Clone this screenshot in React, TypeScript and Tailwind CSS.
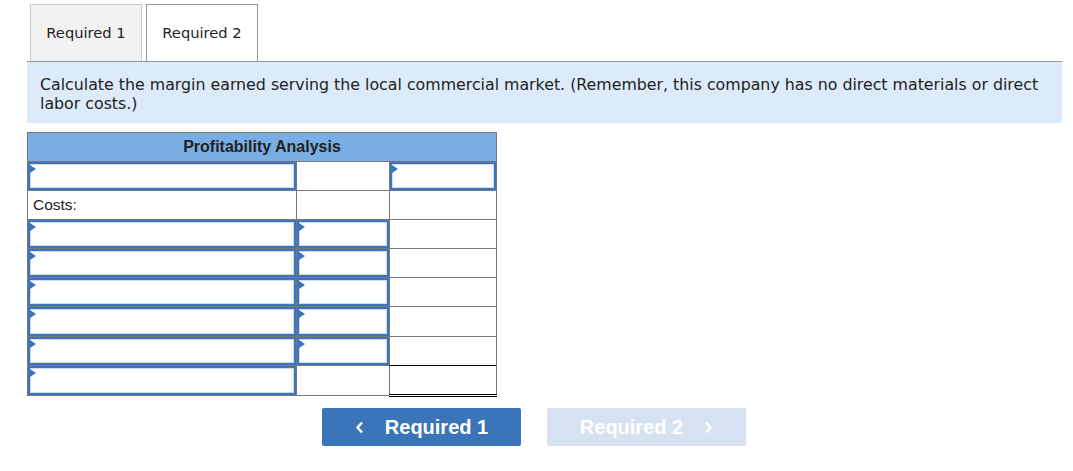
import React from "react";

type CellKind = "inputMark" | "plain" | "label";

function Marker() {
  return (
    <span className="pointer-events-none absolute left-0 top-[1px] h-0 w-0 border-y-[4px] border-l-[6px] border-y-transparent border-l-[#3b73b9]" />
  );
}

function InputBox({ mark }: { mark: boolean }) {
  return (
    <div className="relative h-full w-full border-2 border-[#3d74bb] bg-white shadow-[inset_0_0_0_1px_#c8dcf3]">
      {mark && <Marker />}
    </div>
  );
}

const rows: { cells: CellKind[]; h: string; last?: boolean }[] = [
  { cells: ["inputMark", "plain", "inputMark"], h: "h-[29px]" },
  { cells: ["label", "plain", "plain"], h: "h-[29px]" },
  { cells: ["inputMark", "inputMark", "plain"], h: "h-[29px]" },
  { cells: ["inputMark", "inputMark", "plain"], h: "h-[29px]" },
  { cells: ["inputMark", "inputMark", "plain"], h: "h-[29px]" },
  { cells: ["inputMark", "inputMark", "plain"], h: "h-[30px]" },
  { cells: ["inputMark", "inputMark", "plain"], h: "h-[29px]" },
  { cells: ["inputMark", "plain", "plain"], h: "h-[30px]", last: true },
];

export default function App() {
  return (
    <div className="min-h-[471px] bg-white pt-[4px] font-['DejaVu_Sans',Verdana,sans-serif] text-[#222]">
      <div className="ml-[27px] w-[1035px]">
        {/* Tabs */}
        <div className="flex gap-[4px] pl-[3px]">
          <div className="flex h-[57px] w-[112px] items-center justify-center border border-b-0 border-[#c8c8c8] bg-[#f2f2f2] text-[14.7px]">
            Required 1
          </div>
          <div className="flex h-[57px] w-[112px] items-center justify-center border border-b-0 border-[#999] bg-white text-[14.7px]">
            Required 2
          </div>
        </div>

        {/* Instructions */}
        <div className="border-t border-[#999] bg-[#dcebf9] px-[13px] pb-[10px] pt-[13px] text-[15.8px] leading-[19px]">
          Calculate the margin earned serving the local commercial market. (Remember, this company has no direct materials or direct labor costs.)
        </div>

        {/* Table */}
        <table className="mt-[9px] w-[469px] table-fixed border-collapse border border-[#777] font-['Liberation_Sans',Arial,sans-serif] text-[15.5px]">
          <colgroup>
            <col className="w-[269px]" />
            <col className="w-[93px]" />
            <col className="w-[107px]" />
          </colgroup>
          <thead>
            <tr>
              <th colSpan={3} className="h-[29px] border border-[#777] bg-[#79ade4] text-center text-[16px] font-bold text-[#222]">
                Profitability Analysis
              </th>
            </tr>
          </thead>
          <tbody>
            {rows.map((r, i) => (
              <tr key={i} className={r.h}>
                {r.cells.map((c, j) => {
                  let cls = `${r.h} border border-[#777] p-0 align-middle`;
                  if (r.last && j > 0) cls += " border-t-black";
                  if (r.last && j === 2) cls += " border-b-[3px] border-b-black border-double";
                  return (
                    <td key={j} className={cls}>
                      {c === "label" && <span className="pl-[5px]">Costs:</span>}
                      {c === "inputMark" && <InputBox mark />}
                    </td>
                  );
                })}
              </tr>
            ))}
          </tbody>
        </table>

        {/* Nav buttons */}
        <div className="mt-[11px] flex gap-[26px] pl-[295px] font-['Liberation_Sans',Arial,sans-serif]">
          <button className="flex h-[38px] w-[199px] items-center justify-center gap-[21px] rounded-[2px] bg-[#3a75ba] text-[20px] font-bold text-white">
            <svg width="9" height="13" viewBox="0 0 9 13">
              <polyline points="7,1.5 2.5,6.5 7,11.5" fill="none" stroke="white" strokeWidth="2.4" />
            </svg>
            <span>Required 1</span>
          </button>
          <button className="flex h-[38px] w-[199px] items-center justify-center gap-[21px] rounded-[2px] bg-[#d6e2f1] text-[20px] font-bold text-white">
            <span>Required 2</span>
            <svg width="9" height="13" viewBox="0 0 9 13">
              <polyline points="2,1.5 6.5,6.5 2,11.5" fill="none" stroke="white" strokeWidth="2.4" />
            </svg>
          </button>
        </div>
      </div>
    </div>
  );
}
